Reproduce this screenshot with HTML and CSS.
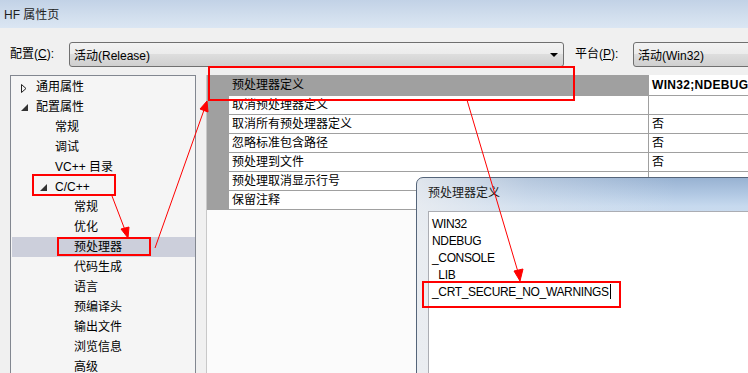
FILE: index.html
```html
<!DOCTYPE html>
<html lang="zh-CN">
<head>
    <meta charset="UTF-8">
    <meta name="viewport" content="width=device-width, initial-scale=1.0">
    <title>HF 属性页</title>
    <link rel="stylesheet" href="styles.css">
</head>
<body>
    <div class="window">
        <div class="titlebar">HF 属性页</div>

        <div class="toolbar">
            <span class="label">配置(<u>C</u>):</span>
            <div class="combo combo-config">
                <span>活动(Release)</span>
                <i class="caret"></i>
            </div>
            <span class="label label-platform">平台(<u>P</u>):</span>
            <div class="combo combo-platform">
                <span>活动(Win32)</span>
            </div>
        </div>

        <div class="main">
            <ul class="tree">
                <li class="lvl0">
                    <span class="exp"><svg width="6" height="9" viewBox="0 0 6 9"><path d="M0.5 0.5 L5 4.5 L0.5 8.5 Z" fill="none" stroke="#222" stroke-width="1"/></svg></span>通用属性
                </li>
                <li class="lvl0">
                    <span class="exp"><svg width="7" height="7" viewBox="0 0 7 7"><path d="M7 0 L7 7 L0 7 Z" fill="#333"/></svg></span>配置属性
                </li>
                <li class="lvl1">常规</li>
                <li class="lvl1">调试</li>
                <li class="lvl1">VC++ 目录</li>
                <li class="lvl1 has-exp">
                    <span class="exp"><svg width="7" height="7" viewBox="0 0 7 7"><path d="M7 0 L7 7 L0 7 Z" fill="#333"/></svg></span>C/C++
                </li>
                <li class="lvl2">常规</li>
                <li class="lvl2">优化</li>
                <li class="lvl2 selected">预处理器</li>
                <li class="lvl2">代码生成</li>
                <li class="lvl2">语言</li>
                <li class="lvl2">预编译头</li>
                <li class="lvl2">输出文件</li>
                <li class="lvl2">浏览信息</li>
                <li class="lvl2">高级</li>
            </ul>

            <div class="grid">
                <div class="row head">
                    <div class="margin"></div>
                    <div class="name">预处理器定义</div>
                    <div class="val"><b class="defs">WIN32;NDEBUG</b></div>
                </div>
                <div class="row">
                    <div class="margin"></div>
                    <div class="name">取消预处理器定义</div>
                    <div class="val"></div>
                </div>
                <div class="row">
                    <div class="margin"></div>
                    <div class="name">取消所有预处理器定义</div>
                    <div class="val">否</div>
                </div>
                <div class="row">
                    <div class="margin"></div>
                    <div class="name">忽略标准包含路径</div>
                    <div class="val">否</div>
                </div>
                <div class="row">
                    <div class="margin"></div>
                    <div class="name">预处理到文件</div>
                    <div class="val">否</div>
                </div>
                <div class="row">
                    <div class="margin"></div>
                    <div class="name">预处理取消显示行号</div>
                    <div class="val"></div>
                </div>
                <div class="row">
                    <div class="margin"></div>
                    <div class="name">保留注释</div>
                    <div class="val"></div>
                </div>
            </div>
        </div>

        <!-- the edit dialog sits on top of the grid -->
        <div class="dialog">
            <div class="dialog-title">预处理器定义</div>
            <div class="editbox">
                <div>WIN32</div>
                <div>NDEBUG</div>
                <div>_CONSOLE</div>
                <div>_LIB</div>
                <div>_CRT_SECURE_NO_WARNINGS<span class="cursor"></span></div>
            </div>
        </div>

        <!-- red annotation marks -->
        <svg class="marks" width="748" height="373" viewBox="0 0 748 373">
            <g fill="none" stroke="#ff0000" stroke-width="2">
                <rect x="209" y="67" width="365" height="33"/>
                <rect x="33" y="175" width="82" height="20"/>
                <rect x="58" y="238" width="92" height="17"/>
                <rect x="423" y="282" width="197" height="25"/>
            </g>
            <g stroke="#ff0000" stroke-width="1" fill="#ff0000">
                <line x1="112" y1="196" x2="125" y2="230"/>
                <path d="M128 238 L121 229 L129 227 Z"/>
                <line x1="155" y1="248" x2="204" y2="110"/>
                <path d="M207 101 L208 112 L200 109 Z"/>
                <line x1="467" y1="100" x2="518" y2="272"/>
                <path d="M520 281 L514 271 L523 269 Z"/>
            </g>
        </svg>
    </div>
</body>
</html>
```

FILE: styles.css
```css
:root {
    --ui-font: "Liberation Sans", "Noto Sans CJK SC", sans-serif;
    --panel-bg: #f0f0f0;
    --grid-line: #a0a0a0;
}

* {
    box-sizing: border-box;
}

body {
    margin: 0;
    font-family: var(--ui-font);
    font-size: 12px;
    color: #000;
    background: var(--panel-bg);
    overflow: hidden;
}

.window {
    position: relative;
    width: 748px;
    height: 373px;
    overflow: hidden;
    background: var(--panel-bg);
}

.titlebar {
    height: 28px;
    padding-left: 4px;
    line-height: 31px;
    color: #1e1e1e;
    background: linear-gradient(to bottom, #c2d2e6, #d2dfee 60%, #dbe6f3);
}

.toolbar {
    display: flex;
    align-items: flex-start;
    height: 47px;
    padding: 14px 0 0 10px;
}

.label {
    width: 59px;
    line-height: 25px;
    flex-shrink: 0;
}

.label-platform {
    width: 58px;
    margin-left: 11px;
}

.combo {
    position: relative;
    display: flex;
    align-items: center;
    height: 25px;
    padding-left: 4px;
    border: 1px solid #707070;
    border-radius: 3px;
    background: linear-gradient(to bottom, #f3f3f3 0%, #ebebeb 50%, #dddddd 50%, #cfcfcf 100%);
    flex-shrink: 0;
}

.combo-config {
    width: 495px;
}

.combo-platform {
    width: 140px;
}

.caret {
    position: absolute;
    right: 5px;
    top: 10px;
    width: 0;
    height: 0;
    border-left: 4px solid transparent;
    border-right: 4px solid transparent;
    border-top: 4px solid #000;
}

.main {
    display: flex;
    gap: 10px;
    padding-left: 10px;
    height: 298px;
}

.tree {
    list-style: none;
    margin: 0;
    padding: 1px 0 0 0;
    width: 186px;
    height: 320px;
    border: 1px solid #828790;
    background: #f5f5f5;
    flex-shrink: 0;
}

.tree li {
    height: 20px;
    line-height: 20px;
    white-space: nowrap;
}

.tree .lvl0 {
    padding-left: 10px;
}

.tree .lvl1 {
    padding-left: 44px;
}

.tree .lvl1.has-exp {
    padding-left: 29px;
}

.tree .lvl2 {
    padding-left: 63px;
}

.tree .exp {
    display: inline-block;
    width: 15px;
    vertical-align: top;
}

.tree .exp svg {
    display: block;
    margin-top: 7px;
}

.tree .selected {
    margin-left: 1px;
    padding-left: 62px;
    background: #cccfdb;
}

.grid {
    flex: 1;
    min-width: 560px;
    background: #fbfbfb;
    border-left: 1px solid #c8c8c8;
}

.row {
    display: flex;
    height: 19px;
    line-height: 18px;
}

.row.head {
    height: 21px;
    line-height: 20px;
}

.row .margin {
    width: 22px;
    background: var(--grid-line);
    flex-shrink: 0;
}

.row .name {
    width: 420px;
    padding-left: 3px;
    background: #fff;
    border-right: 1px solid var(--grid-line);
    border-bottom: 1px solid var(--grid-line);
    white-space: nowrap;
    flex-shrink: 0;
}

.row.head .name {
    background: var(--grid-line);
}

.row .val {
    flex: 1;
    padding-left: 3px;
    background: #fff;
    border-bottom: 1px solid var(--grid-line);
    white-space: nowrap;
    overflow: hidden;
}

.defs {
    letter-spacing: 0.3px;
}

.dialog {
    position: absolute;
    left: 416px;
    top: 177px;
    width: 360px;
    height: 230px;
    border: 1px solid #55657a;
    border-radius: 7px 0 0 0;
    padding-left: 11px;
    background:
        linear-gradient(to right, rgba(236, 238, 241, 0.85) 0px, rgba(236, 238, 241, 0.35) 110px, rgba(236, 238, 241, 0) 260px),
        linear-gradient(to bottom, #98b2d2 0px, #b1c8e3 16px, #c6d9ee 28px, #d9e4f0 60px, #e2e9f1 100%);
}

.dialog-title {
    height: 28px;
    line-height: 31px;
    color: #1a1a1a;
}

.editbox {
    margin-top: 5px;
    height: 200px;
    padding: 4px 3px;
    line-height: 17px;
    letter-spacing: -0.35px;
    background: #fff;
    border: 1px solid #abadb3;
}

.cursor {
    display: inline-block;
    width: 1px;
    height: 15px;
    margin-left: 1px;
    vertical-align: -3px;
    background: #000;
}

.marks {
    position: absolute;
    left: 0;
    top: 0;
    pointer-events: none;
}
```
